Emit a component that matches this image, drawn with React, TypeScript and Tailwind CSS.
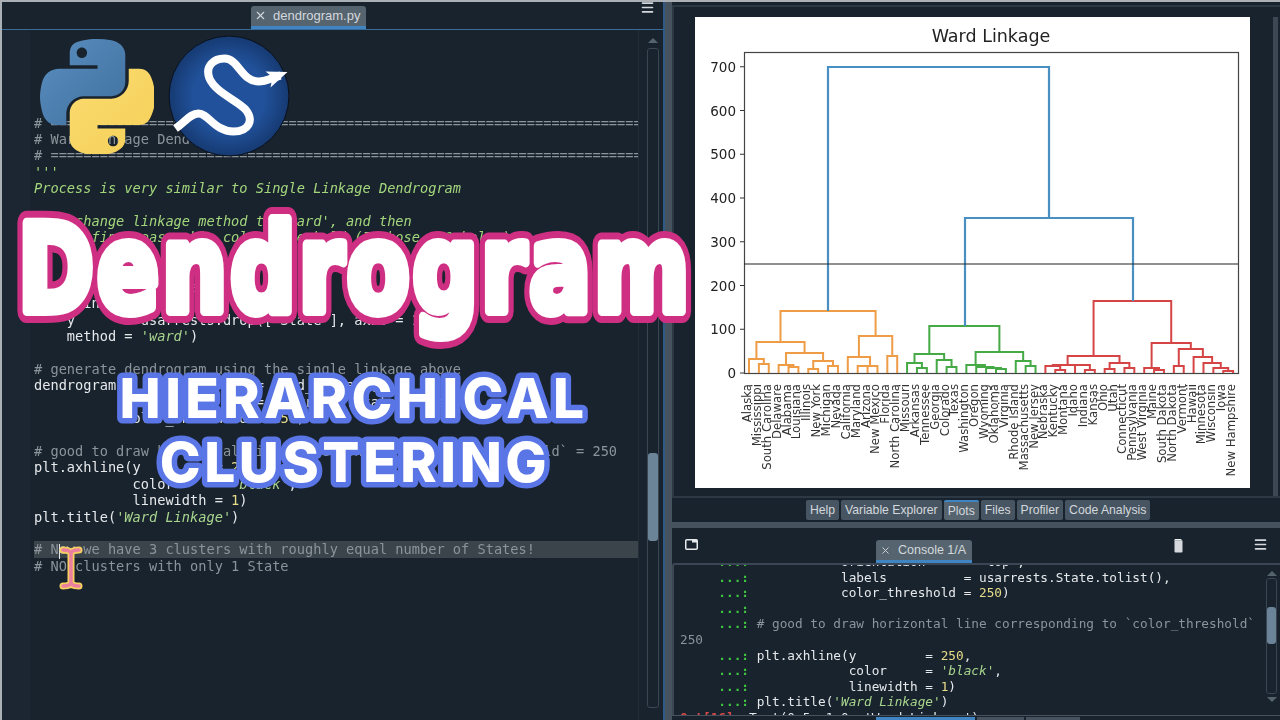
import { Menu, X } from "lucide-react";

type Kind = "code" | "comment" | "str" | "num" | "doc" | "prompt" | "err";
type Seg = [string, Kind];
type Tree = number | [number, Tree, Tree];

const kindClass: Record<Kind, string> = {
  code: "text-[#e6e9ec]",
  comment: "text-[#8b949b]",
  str: "italic text-[#a8d68f]",
  num: "text-[#e8dd8a]",
  doc: "italic text-[#a3d67c]",
  prompt: "font-bold text-[#3fc93f]",
  err: "font-bold text-[#d84a4a]",
};

const rule = "# " + "=".repeat(74);

const editorLines: Seg[][] = [
  [[rule, "comment"]],
  [["# Ward Linkage Dendrogram", "comment"]],
  [[rule, "comment"]],
  [["'''", "doc"]],
  [["Process is very similar to Single Linkage Dendrogram", "doc"]],
  [],
  [["Just change linkage method to 'ward', and then", "doc"]],
  [["then define reasonable color threshold (I chose 250 below)", "doc"]],
  [["'''", "doc"]],
  [],
  [["ward_linkage = linkage(", "code"]],
  [["    _linkage", "code"]],
  [["    y      = usarrests.drop(['State'], axis = 1),", "code"]],
  [["    method = ", "code"], ["'ward'", "str"], [")", "code"]],
  [],
  [["# generate dendrogram using the single linkage above", "comment"]],
  [["dendrogram(Z               = ward_linkage,", "code"]],
  [["           labels          = usarrests.State.tolist(),", "code"]],
  [["           color_threshold = ", "code"], ["250", "num"], [")", "code"]],
  [],
  [["# good to draw horizontal line corresponding to `color_threshold` = 250", "comment"]],
  [["plt.axhline(y         = ", "code"], ["250", "num"], [",", "code"]],
  [["            color     = ", "code"], ["'black'", "str"], [",", "code"]],
  [["            linewidth = ", "code"], ["1", "num"], [")", "code"]],
  [["plt.title(", "code"], ["'Ward Linkage'", "str"], [")", "code"]],
  [],
  [["# Now we have 3 clusters with roughly equal number of States!", "comment"]],
  [["# NO clusters with only 1 State", "comment"]],
];

const prompt: Seg = ["     ...: ", "prompt"];

const consoleLines: Seg[][] = [
  [prompt, ["           orientation     = 'top',", "code"]],
  [prompt, ["           labels          = usarrests.State.tolist(),", "code"]],
  [prompt, ["           color_threshold = ", "code"], ["250", "num"], [")", "code"]],
  [prompt],
  [prompt, ["# good to draw horizontal line corresponding to `color_threshold`", "comment"]],
  [["250", "comment"]],
  [prompt, ["plt.axhline(y         = ", "code"], ["250", "num"], [",", "code"]],
  [prompt, ["            color     = ", "code"], ["'black'", "str"], [",", "code"]],
  [prompt, ["            linewidth = ", "code"], ["1", "num"], [")", "code"]],
  [prompt, ["plt.title(", "code"], ["'Ward Linkage'", "str"], [")", "code"]],
  [["Out[16]: ", "err"], ["Text(0.5, 1.0, 'Ward Linkage')", "code"]],
];

const states = [
  "Alaska", "Mississippi", "South Carolina", "Delaware", "Alabama", "Louisiana", "Illinois", "New York", "Michigan", "Nevada",
  "California", "Maryland", "Arizona", "New Mexico", "Florida", "North Carolina", "Missouri", "Arkansas", "Tennessee", "Georgia",
  "Colorado", "Texas", "Washington", "Oregon", "Wyoming", "Oklahoma", "Virginia", "Rhode Island", "Massachusetts", "New Jersey",
  "Nebraska", "Kentucky", "Montana", "Idaho", "Indiana", "Kansas", "Ohio", "Utah", "Connecticut", "Pennsylvania",
  "West Virginia", "Maine", "South Dakota", "North Dakota", "Vermont", "Hawaii", "Minnesota", "Wisconsin", "Iowa", "New Hampshire",
];

// heights are pixels above the axis baseline
const orange: Tree = [62,
  [31,
    [14, 0, [9, 1, 2]],
    [20, [8, 3, [6, 4, 5]], [12, [4, 6, 7], [7, 8, 9]]]],
  [37,
    [16, 10, [7, [7, 11, 12], 13]],
    [17, 14, 15]],
];
const green: Tree = [47,
  [19, [10, 16, [5, 17, 18]], [13, 19, [6, 20, 21]]],
  [21, [8, 22, [6, 23, [5, 24, [4, 25, 26]]]], [12, 27, [7, 28, 29]]],
];
const red: Tree = [72,
  [17,
    [8, [7, 30, [3, 31, 32]], [8, 33, [3, 34, 35]]],
    [10, [4, 36, 37], [5, 38, 39]]],
  [30,
    [5, 40, [3, 41, 42]],
    [24, [7, 43, 44], [16, 45, [10, 46, [5, 47, [2, 48, 49]]]]]],
];

const baseY = 373;
const leafX = (i: number) => 749 + 9.88 * i;

function walk(node: Tree, out: string[]): { x: number; h: number } {
  if (typeof node === "number") return { x: leafX(node), h: 0 };
  const l = walk(node[1], out);
  const r = walk(node[2], out);
  out.push(`M${l.x} ${baseY - l.h}V${baseY - node[0]}H${r.x}V${baseY - r.h}`);
  return { x: (l.x + r.x) / 2, h: node[0] };
}

function Cluster({ tree, color }: { tree: Tree; color: string }) {
  const out: string[] = [];
  walk(tree, out);
  return <path d={out.join("")} fill="none" stroke={color} strokeWidth={2} />;
}

function Line({ segs }: { segs: Seg[] }) {
  return (
    <>
      {segs.map(([text, kind], i) => (
        <span key={i} className={kindClass[kind]}>{text}</span>
      ))}
    </>
  );
}

function Editor() {
  return (
    <div className="flex h-full w-[663px] flex-col border-l-2 border-[#aab0b5]">
      <div className="flex h-[29px] items-end pl-[249px]">
        <div className="flex h-[23px] w-[115px] items-center gap-[6px] rounded-t-[3px] border-b-[3px] border-[#3f85c4] bg-[#56646f] pl-[3px] pb-[1px] font-['Liberation_Sans',sans-serif] text-[13px] text-[#d3d8dc]">
          <X size={13} />
          dendrogram.py
        </div>
        <Menu size={15} strokeWidth={2.6} className="mb-[14px] ml-[274px] text-[#d5d9dd]" />
      </div>
      <div className="flex min-h-0 flex-1 border-t border-[#3a6c97]">
        <div className="w-[28px] bg-[#1b2632]" />
        <div className="w-[608px] overflow-hidden pl-[4px] pt-[84.5px] font-['DejaVu_Sans_Mono',monospace] text-[13.65px] leading-[16.43px] blur-[0.4px]">
          {editorLines.map((segs, i) => (
            <div key={i} className={`h-[16.43px] whitespace-pre ${i === 26 ? "bg-[#3b434b]" : ""}`}>
              <Line segs={segs} />
            </div>
          ))}
        </div>
        <EditorScroll />
      </div>
    </div>
  );
}

function EditorScroll() {
  return (
    <div className="flex w-[25px] flex-col items-center border-l border-[#242e38] pl-[4px] pt-[8px]">
      <div className="h-0 w-0 border-x-[5px] border-b-[5px] border-x-transparent border-b-[#56646f]" />
      <div className="mt-[5px] flex h-[660px] w-[12px] flex-col rounded-[3px] border border-[#3a4653] pt-[404px]">
        <div className="h-[88px] rounded-[3px] bg-[#6b8497]" />
      </div>
    </div>
  );
}

function Dendrogram() {
  const ticks = [700, 600, 500, 400, 300, 200, 100, 0];
  return (
    <svg viewBox="695 17 555 471" width={555} height={471} className="block bg-white font-['DejaVu_Sans',sans-serif] blur-[0.5px]">
      <text x={991} y={42} textAnchor="middle" fontSize={17.5} fill="#222">Ward Linkage</text>
      <rect x={744.5} y={52.5} width={494} height={321} fill="none" stroke="#444" strokeWidth={1.2} />
      {ticks.map((t) => {
        const y = 373 - t * 0.4375;
        return (
          <g key={t}>
            <line x1={740} x2={744} y1={y} y2={y} stroke="#333" />
            <text x={736} y={y + 5} textAnchor="end" fontSize={13.5} fill="#222">{t}</text>
          </g>
        );
      })}
      <Cluster tree={orange} color="#ef9c47" />
      <Cluster tree={green} color="#45a945" />
      <Cluster tree={red} color="#d64545" />
      <path d="M828 311V67H1049V218M965 326V218H1133V301" fill="none" stroke="#4a8fc2" strokeWidth={2.2} />
      <line x1={744} x2={1238} y1={264} y2={264} stroke="#222" strokeWidth={1.2} />
      {states.map((s, i) => (
        <text
          key={s}
          transform={`translate(${leafX(i) + 2},384) rotate(-90)`}
          textAnchor="end"
          fontSize={11.7}
          fill="#333"
        >
          {s}
        </text>
      ))}
    </svg>
  );
}

const plotTabs = ["Help", "Variable Explorer", "Plots", "Files", "Profiler", "Code Analysis"];

function PlotsPane() {
  return (
    <div className="flex h-[522px] flex-col pt-[5px]">
      <div className="flex min-h-0 flex-1 justify-between border-b-2 border-l-2 border-t-2 border-[#2c3844] pl-[21px] pt-[10px]">
        <Dendrogram />
        <div className="mr-[2px] w-[5px] bg-[#3c4753]" />
      </div>
      <div className="flex h-[24px] items-center gap-[2px] pl-[134px] font-['Liberation_Sans',sans-serif] text-[12.2px] text-[#d3d8dc]">
        {plotTabs.map((t) => (
          <div
            key={t}
            className={`flex h-[20px] items-center rounded-[2px] px-[4px] ${t === "Plots" ? "border-t-2 border-[#3f85c4] bg-[#56646f]" : "bg-[#475562]"}`}
          >
            {t}
          </div>
        ))}
      </div>
    </div>
  );
}

function ConsolePane() {
  return (
    <div className="flex min-h-0 flex-1 flex-col">
      <div className="h-[6px] bg-[#46525e]" />
      <div className="flex h-[35px] items-end pl-[13px]">
        <svg width={13} height={11} viewBox="0 0 13 11" className="mb-[13px]">
          <rect x={0.75} y={0.75} width={11.5} height={9.5} rx={1} fill="#19232d" stroke="#e8ebee" strokeWidth={1.5} />
          <path d="M2 3h5v1.5h4V9H2z" fill="#19232d" />
          <path d="M7 1h5v2.5H7z" fill="#e8ebee" />
        </svg>
        <div className="ml-[178px] flex h-[23px] w-[96px] items-center gap-[7px] rounded-t-[3px] border-b-[3px] border-[#3f85c4] bg-[#56646f] pl-[4px] font-['Liberation_Sans',sans-serif] text-[12.5px] text-[#d3d8dc]">
          <X size={11} />
          Console 1/A
        </div>
        <svg width={11} height={15} viewBox="0 0 11 15" className="mb-[10px] ml-[201px]">
          <path d="M1.5 2.5h8v11a1 1 0 0 1-1 1h-6a1 1 0 0 1-1-1z" fill="#d5d9dd" />
          <path d="M2 1h6l1 1.5H1z" fill="#eef0f2" />
        </svg>
        <Menu size={15} strokeWidth={2.6} className="mb-[11px] ml-[69px] text-[#d5d9dd]" />
      </div>
      <div className="flex h-[152px] overflow-hidden rounded-tl-[3px] border-l-2 border-t-2 border-[#3a4653]">
        <div className="w-[591px] overflow-hidden pl-[6px] font-['DejaVu_Sans_Mono',monospace] text-[12.74px] leading-[15.6px] blur-[0.4px]">
          <div className="-mt-[11px]">
            {consoleLines.map((segs, i) => (
              <div key={i} className="h-[15.6px] whitespace-pre">
                <Line segs={segs} />
              </div>
            ))}
          </div>
        </div>
        <div className="flex w-[13px] flex-col items-center pt-[6px]">
          <div className="h-0 w-0 border-x-[5px] border-b-[5px] border-x-transparent border-b-[#56646f]" />
          <div className="mt-[2px] h-[116px] w-[11px] rounded-[3px] border border-[#3a4653] pt-[28px]">
            <div className="h-[37px] rounded-[3px] bg-[#6b8497]" />
          </div>
          <div className="mt-[3px] h-0 w-0 border-x-[5px] border-t-[5px] border-x-transparent border-t-[#56646f]" />
        </div>
      </div>
      <div className="flex flex-1 items-end gap-[2px] border-t border-[#46525e] pl-[204px]">
        <div className="h-[3px] w-[99px] bg-[#3f85c4]" />
        <div className="h-[3px] w-[47px] bg-[#46525e]" />
        <div className="h-[3px] w-[54px] bg-[#46525e]" />
      </div>
    </div>
  );
}

function Logos() {
  return (
    <div className="absolute left-[40px] top-[35px] flex items-center gap-[14px]">
      <svg width={114} height={115} viewBox="0 0 110 111">
        <defs>
          <linearGradient id="pyBlue" x1="0" y1="0" x2="1" y2="1">
            <stop offset="0" stopColor="#5a8fc0" />
            <stop offset="1" stopColor="#3f6f9d" />
          </linearGradient>
          <linearGradient id="pyYellow" x1="0" y1="0" x2="1" y2="1">
            <stop offset="0" stopColor="#fbdc70" />
            <stop offset="1" stopColor="#f5cf58" />
          </linearGradient>
        </defs>
        <path
          fill="url(#pyBlue)"
          d="M54.919 0.001c-4.584.022-8.961.413-12.812 1.095C30.76 3.099 28.7 7.295 28.7 15.032v10.219h26.813v3.406H28.7 18.638c-7.793 0-14.616 4.684-16.75 13.594-2.462 10.213-2.571 16.586 0 27.25 1.906 7.938 6.458 13.594 14.25 13.594h9.219V71.844c0-8.85 7.657-16.656 16.75-16.656h26.781c7.455 0 13.406-6.138 13.406-13.625V15.032c0-7.266-6.13-12.725-13.406-13.937C64.282.328 59.502-.02 54.919.001zM40.419 8.22c2.77 0 5.031 2.299 5.031 5.125 0 2.816-2.262 5.094-5.031 5.094-2.779 0-5.031-2.277-5.031-5.094 0-2.826 2.252-5.125 5.031-5.125z"
        />
        <path
          fill="url(#pyYellow)"
          d="M85.638 28.657v11.906c0 9.231-7.826 17-16.75 17H42.106c-7.336 0-13.406 6.279-13.406 13.625v25.531c0 7.266 6.319 11.54 13.406 13.625 8.487 2.496 16.626 2.947 26.781 0 6.75-1.954 13.406-5.888 13.406-13.625V86.501H55.513v-3.406h26.781 13.406c7.793 0 10.696-5.436 13.406-13.594 2.799-8.398 2.68-16.476 0-27.25-1.926-7.757-5.604-13.594-13.406-13.594H85.638zM70.575 93.313c2.779 0 5.031 2.277 5.031 5.094 0 2.826-2.252 5.125-5.031 5.125-2.77 0-5.031-2.299-5.031-5.125 0-2.816 2.262-5.094 5.031-5.094z"
        />
      </svg>
      <svg width={122} height={122} viewBox="167.5 34.5 122 122">
        <defs>
          <radialGradient id="snsBg" cx="0.5" cy="0.5" r="0.5">
            <stop offset="0.6" stopColor="#21519a" />
            <stop offset="1" stopColor="#163a72" />
          </radialGradient>
        </defs>
        <circle cx={228.5} cy={95.5} r={60} fill="url(#snsBg)" stroke="#0a0f18" strokeWidth={1} />
        <path
          d="M175 128C186 120 190 113 198 113C208 113 214 131 233 131C248 131 254 120 245 109C237 100 215 92 209 78C204 65 214 58 224 58C238 58 241 81 258 81C266 81 272 77 280 75"
          fill="none"
          stroke="#fff"
          strokeWidth={8}
        />
        <path d="M287 71.5L265 71L272 76.5L270 87z" fill="#fff" />
      </svg>
    </div>
  );
}

function TitleOverlay() {
  return (
    <svg viewBox="0 0 1280 720" width={1280} height={720} className="pointer-events-none absolute left-0 top-0">
      <use href="#titleMain" stroke="#cf2f82" strokeWidth={24} strokeLinejoin="round" />
      <g stroke="#fff" strokeWidth={10} strokeLinejoin="round">
        <text
          id="titleMain"
          fill="#fff"
          fontSize={122}
          fontWeight={700}
          letterSpacing={4}
          transform="translate(18 311) scale(0.75 1)"
          className="font-['DejaVu_Sans',sans-serif]"
        >
          Dendrogram
        </text>
      </g>
      <use href="#titleSub1" stroke="#5a75e6" strokeWidth={11} strokeLinejoin="round" />
      <use href="#titleSub2" stroke="#5a75e6" strokeWidth={11} strokeLinejoin="round" />
      <g>
        <text
          id="titleSub1"
          x={354}
          y={418}
          fill="#fff"
          fontSize={55}
          fontWeight={800}
          letterSpacing={4.4}
          textAnchor="middle"
          className="font-['Inter',sans-serif]"
        >
          HIERARCHICAL
        </text>
        <text
          id="titleSub2"
          x={355}
          y={482}
          fill="#fff"
          fontSize={55}
          fontWeight={800}
          letterSpacing={3.6}
          textAnchor="middle"
          className="font-['Inter',sans-serif]"
        >
          CLUSTERING
        </text>
      </g>
    </svg>
  );
}

function Cursor() {
  return (
    <svg width={24} height={44} viewBox="0 0 24 44" className="absolute left-[59px] top-[546px]">
      <path d="M4 4C8 4 12 5 12 8V36C12 39 8 40 4 40M20 4C16 4 12 5 12 8M12 36C12 39 16 40 20 40" fill="none" stroke="#f5d060" strokeWidth={7} strokeLinecap="round" />
      <path d="M4 4C8 4 12 5 12 8V36C12 39 8 40 4 40M20 4C16 4 12 5 12 8M12 36C12 39 16 40 20 40" fill="none" stroke="#ea7fa0" strokeWidth={3.5} strokeLinecap="round" />
    </svg>
  );
}

export default function App() {
  return (
    <div className="relative flex h-[720px] w-[1280px] overflow-hidden bg-[#19232d]">
      <Editor />
      <div className="w-[2px] bg-[#2f5a86]" />
      <div className="w-[7px] bg-[#46525e]" />
      <div className="flex min-w-0 flex-1 flex-col">
        <PlotsPane />
        <ConsolePane />
      </div>
      <div className="absolute left-0 top-0 h-[2px] w-full bg-[#aab0b5]" />
      <div className="absolute left-[59px] top-[544px] h-[15px] w-px bg-[#e6e9ec]" />
      <Logos />
      <TitleOverlay />
      <Cursor />
    </div>
  );
}
